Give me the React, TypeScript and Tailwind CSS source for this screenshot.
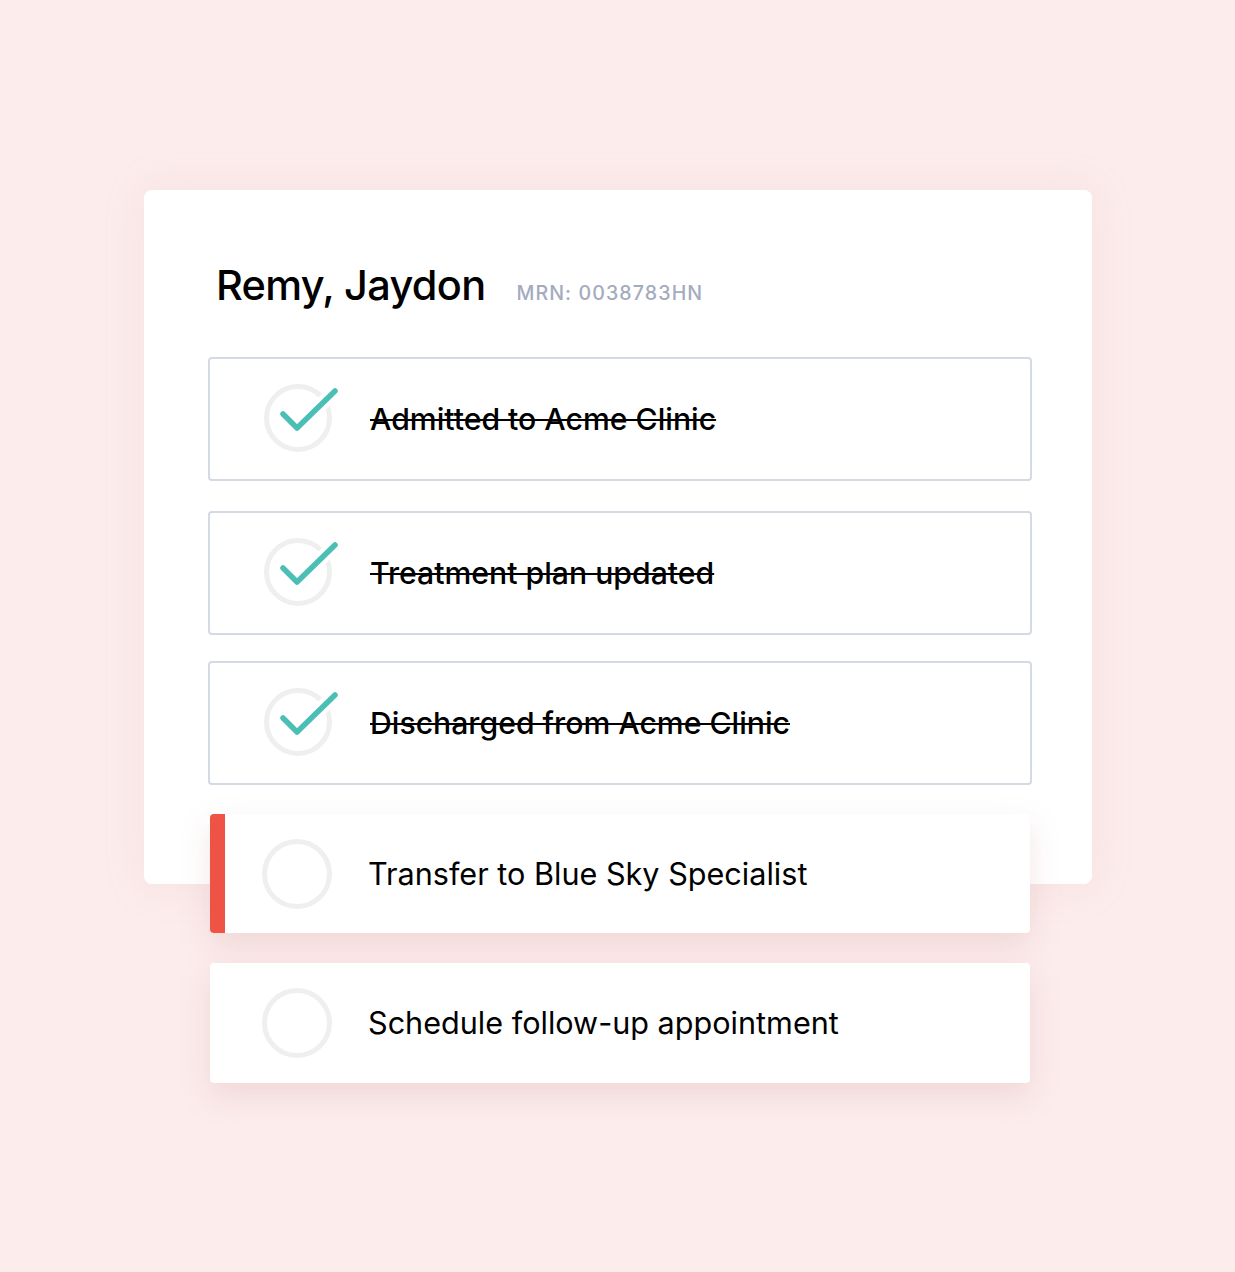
import React from "react";

const done = [
  { t: "Admitted to Acme Clinic", mt: "mt-0" },
  { t: "Treatment plan updated", mt: "mt-[30px]" },
  { t: "Discharged from Acme Clinic", mt: "mt-[26px]" },
];

function CheckIcon() {
  return (
    <svg width="80" height="80" viewBox="0 0 80 80" className="shrink-0 overflow-visible">
      <circle cx="35" cy="35" r="31.5" fill="none" stroke="#efefef" strokeWidth="5" />
      <path d="M20 31 L34 45 L72 8" fill="none" stroke="#ffffff" strokeWidth="14" strokeLinecap="round" strokeLinejoin="round" />
      <path d="M20 31 L34 45 L72 8" fill="none" stroke="#4bbfb5" strokeWidth="5.5" strokeLinecap="round" strokeLinejoin="round" />
    </svg>
  );
}

function EmptyCircle() {
  return (
    <svg width="72" height="72" viewBox="0 0 72 72" className="shrink-0">
      <circle cx="36" cy="36" r="32.5" fill="none" stroke="#efefef" strokeWidth="5" />
    </svg>
  );
}

export default function App() {
  return (
    <div className="min-h-[1272px] w-[1235px] bg-[#fcecec] pt-[190px] pl-[144px]" style={{ fontFamily: "Inter, 'Noto Sans', sans-serif" }}>
      {/* main card */}
      <div className="h-[694px] w-[948px] rounded-lg bg-white pt-[64px] pl-[64px] pr-[60px] shadow-[0_0_40px_rgba(220,170,170,0.18)]">
        <div className="flex items-baseline pl-[8px]">
          <h1 className="text-[41.5px] font-medium tracking-[-0.7px] text-black">Remy, Jaydon</h1>
          <span className="ml-[31px] text-[19.6px] font-medium tracking-[1.1px] text-[#a3abbd]">MRN: 0038783HN</span>
        </div>

        <div className="mt-[41px] flex flex-col">
          {done.map((d) => (
            <div key={d.t} className={`${d.mt} flex h-[124px] items-center rounded-[4px] border-2 border-[#d3dae3] pl-[53px]`}>
              <div className="h-[70px] w-[70px] -mt-[2px]">
                <CheckIcon />
              </div>
              <span className="ml-[37px] text-[30.2px] font-medium text-black line-through decoration-2">{d.t}</span>
            </div>
          ))}
        </div>
      </div>

      {/* floating tasks */}
      <div className="relative -mt-[70px] ml-[66px] flex w-[820px] flex-col gap-[30px]">
        <div className="flex h-[119px] items-center overflow-hidden rounded-[4px] bg-white shadow-[0_12px_30px_rgba(200,140,140,0.22)]">
          <div className="h-full w-[15px] bg-[#ef5345]" />
          <div className="ml-[36px]">
            <EmptyCircle />
          </div>
          <span className="ml-[35px] text-[30.6px] text-black">Transfer to Blue Sky Specialist</span>
        </div>
        <div className="flex h-[120px] items-center rounded-[4px] bg-white pl-[51px] shadow-[0_12px_30px_rgba(200,140,140,0.22)]">
          <EmptyCircle />
          <span className="ml-[35px] text-[30.6px] text-black">Schedule follow-up appointment</span>
        </div>
      </div>
    </div>
  );
}
